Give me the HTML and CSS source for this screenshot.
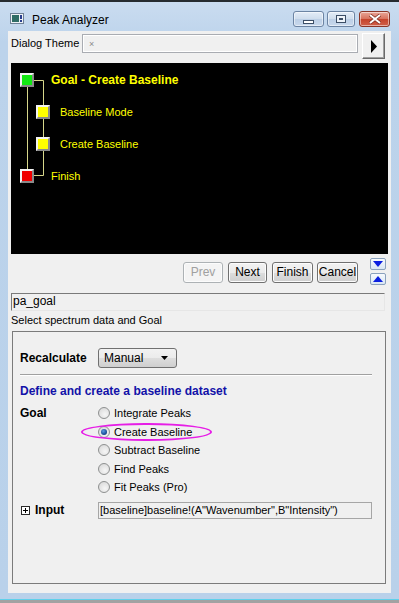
FILE: index.html
```html
<!DOCTYPE html>
<html lang="en">

<head>
    <meta charset="UTF-8">
    <meta name="viewport" content="width=device-width, initial-scale=1.0">
    <title>Peak Analyzer</title>
    <link rel="stylesheet" href="styles.css">
</head>

<body>
    <div class="window">
        <!-- 标题栏 -->
        <div class="titlebar">
            <svg class="app-icon" width="14" height="11" viewBox="0 0 14 11">
                <rect x="0.5" y="0.5" width="13" height="10" fill="#eef2f6" stroke="#6f8297" />
                <rect x="2" y="2" width="7" height="7" fill="#2f6d66" />
                <rect x="10" y="2" width="2" height="4" fill="#2a3f8f" />
                <rect x="10" y="7" width="2" height="2" fill="#2a3f8f" />
            </svg>
            <span class="title">Peak Analyzer</span>
            <div class="caption-btns">
                <span class="cap-btn min"><i></i></span>
                <span class="cap-btn max"><i></i></span>
                <span class="cap-btn close">
                    <svg width="14" height="10" viewBox="0 0 14 10">
                        <path d="M2 1 L12 9 M12 1 L2 9" stroke="#7a2a1e" stroke-width="3.4" />
                        <path d="M2 1 L12 9 M12 1 L2 9" stroke="#ffffff" stroke-width="2" />
                    </svg>
                </span>
            </div>
        </div>

        <div class="client">
            <div class="theme-row">
                <span class="theme-label">Dialog Theme</span>
                <div class="theme-input"><span class="theme-x">×</span></div>
                <span class="theme-btn">
                    <svg width="8" height="13" viewBox="0 0 8 13"><path d="M1 0 L7 6.5 L1 13 Z" fill="#000" /></svg>
                </span>
            </div>

            <!-- 向导树 -->
            <div class="wizard">
                <svg class="wizard-lines" width="60" height="130" viewBox="0 0 60 130">
                    <path d="M23 17.5 H32.5 V112.5 H23 M16.5 24 V106" stroke="#d6d68a" stroke-width="1" fill="none" />
                </svg>
                <div class="node lv0"><span class="box green"></span><span class="node-label goal">Goal - Create Baseline</span></div>
                <div class="node lv1"><span class="box yellow"></span><span class="node-label">Baseline Mode</span></div>
                <div class="node lv1"><span class="box yellow"></span><span class="node-label">Create Baseline</span></div>
                <div class="node lv0"><span class="box red"></span><span class="node-label finish">Finish</span></div>
            </div>

            <div class="nav-row">
                <span class="nav-btn disabled w40">Prev</span>
                <span class="nav-btn w39">Next</span>
                <span class="nav-btn w41">Finish</span>
                <span class="nav-btn w41 cancel">Cancel</span>
                <div class="arrows">
                    <span class="arrow-btn"><svg width="10" height="6" viewBox="0 0 10 6"><path d="M0 0 H10 L5 6 Z" fill="#0a1ee0" /></svg></span>
                    <span class="arrow-btn"><svg width="10" height="6" viewBox="0 0 10 6"><path d="M0 6 H10 L5 0 Z" fill="#0a1ee0" /></svg></span>
                </div>
            </div>

            <div class="name-box">pa_goal</div>
            <p class="desc">Select spectrum data and Goal</p>

            <div class="group">
                <div class="recalc-row">
                    <span class="field-label">Recalculate</span>
                    <span class="combo">Manual<svg width="7" height="4" viewBox="0 0 7 4"><path d="M0 0 H7 L3.5 4 Z" fill="#000" /></svg></span>
                </div>
                <div class="divider"></div>
                <h3 class="section-title">Define and create a baseline dataset</h3>

                <div class="goal-row">
                    <span class="field-label">Goal</span>
                    <ul class="radio-list">
                        <li><span class="radio"></span>Integrate Peaks</li>
                        <li class="picked"><span class="radio on"></span>Create Baseline<span class="ring"></span></li>
                        <li><span class="radio"></span>Subtract Baseline</li>
                        <li><span class="radio"></span>Find Peaks</li>
                        <li><span class="radio"></span>Fit Peaks (Pro)</li>
                    </ul>
                </div>

                <div class="input-row">
                    <span class="field-label expand"><span class="plus"></span>Input</span>
                    <span class="input-field">[baseline]baseline!(A"Wavenumber",B"Intensity")</span>
                </div>
            </div>
        </div>
    </div>
</body>

</html>
```

FILE: styles.css
```css
* {
    padding: 0;
    margin: 0;
    list-style: none;
    box-sizing: border-box;
}

body {
    background: #a2a2a2;
    font-family: "Liberation Sans", Arial, sans-serif;
    font-size: 11px;
    color: #000;
}

.window {
    height: 600px;
    background: linear-gradient(to bottom, #cadcf0 0, #bcd3eb 40px, #b9d1ea 100%);
    border-top: 2px solid #262b30;
    border-bottom: 1px solid #5fd0ea;
    padding: 0 8px 6px;
    display: flex;
    flex-direction: column;
}

/* 标题栏 */
.titlebar {
    height: 29px;
    display: flex;
    align-items: flex-start;
}

.app-icon {
    margin: 11px 0 0 2px;
}

.title {
    margin: 10px 0 0 8px;
    font-size: 12px;
    line-height: 16px;
    color: #000;
}

.caption-btns {
    display: flex;
    margin: 9px 1px 0 auto;
}

.cap-btn {
    height: 16px;
    border: 1px solid #6c84a3;
    border-radius: 3px;
    background: linear-gradient(to bottom, #e3ecf7 0, #cfdded 50%, #bccfe6 51%, #c8d8ec 100%);
    display: flex;
    align-items: center;
    justify-content: center;
    box-shadow: inset 0 0 0 1px rgba(255, 255, 255, 0.5);
}

.cap-btn.min {
    width: 31px;
}

.cap-btn.min i {
    width: 11px;
    height: 4px;
    margin-top: 5px;
    border: 1px solid #3c4e66;
    background: #fff;
}

.cap-btn.max {
    width: 28px;
    margin-left: 3px;
}

.cap-btn.max i {
    width: 10px;
    height: 8px;
    border: 1px solid #3c4e66;
    box-shadow: inset 0 0 0 2px #eef3f9;
    background: #3c4e66;
}

.cap-btn.close {
    width: 31px;
    margin-left: 4px;
    border-color: #8a3527;
    background: linear-gradient(to bottom, #e9a698 0, #d8715c 50%, #c5432b 51%, #d0604a 100%);
}

/* 客户区 */
.client {
    flex: 1;
    background: #f0f0f0;
    padding-left: 3px;
    display: flex;
    flex-direction: column;
}

.theme-row {
    display: flex;
    height: 26px;
    margin-top: 2px;
}

.theme-label {
    width: 71px;
    margin-top: 1px;
    line-height: 19px;
}

.theme-input {
    width: 276px;
    height: 19px;
    margin-top: 1px;
    border: 1px solid #a9acb2;
    background: #f0f0f0;
    box-shadow: inset 1px 1px 0 #fff, inset -1px -1px 0 #fff;
    line-height: 16px;
}

.theme-x {
    font-size: 9px;
    color: #8a8a8a;
    margin-left: 6px;
}

.theme-btn {
    width: 23px;
    height: 26px;
    margin-left: 4px;
    border: 1px solid;
    border-color: #fff #6a6a6a #6a6a6a #fff;
    box-shadow: inset -1px -1px 0 #a0a0a0;
    background: #f0f0f0;
    display: flex;
    align-items: center;
    justify-content: center;
}

/* 向导树 */
.wizard {
    position: relative;
    height: 191px;
    margin: 4px 3px 0 0;
    background: #000;
    padding-top: 10px;
    display: flex;
    flex-direction: column;
    gap: 18px;
}

.wizard-lines {
    position: absolute;
    left: 0;
    top: 0;
}

.node {
    position: relative;
    height: 14px;
    display: flex;
    align-items: center;
}

.node.lv0 {
    padding-left: 9px;
}

.node.lv1 {
    padding-left: 25px;
}

.box {
    width: 14px;
    height: 14px;
    border: 2px solid;
    border-color: #f4f4f4 #8a8a8a #8a8a8a #f4f4f4;
}

.box.green {
    background: #12e812;
}

.box.yellow {
    background: #ffff00;
}

.box.red {
    background: #f00000;
}

.node-label {
    color: #ffff00;
    font-size: 11px;
    margin-left: 10px;
}

.node-label.goal {
    font-size: 12px;
    font-weight: bold;
    margin-left: 17px;
}

.node-label.finish {
    margin-left: 17px;
}

/* 导航按钮 */
.nav-row {
    height: 39px;
    display: flex;
    justify-content: flex-end;
    align-items: flex-start;
    padding-right: 5px;
}

.nav-btn {
    height: 21px;
    margin-top: 8px;
    margin-left: 5px;
    border: 1px solid #707070;
    border-radius: 3px;
    background: linear-gradient(to bottom, #f2f2f2 0, #ebebeb 50%, #dddddd 51%, #cfcfcf 100%);
    box-shadow: inset 0 0 0 1px #fcfcfc;
    font-size: 12px;
    line-height: 19px;
    text-align: center;
}

.nav-btn.cancel {
    margin-left: 4px;
}

.nav-btn.disabled {
    border-color: #adb2b5;
    background: #f4f4f4;
    color: #a0a0a0;
}

.w39 {
    width: 39px;
}

.w40 {
    width: 40px;
}

.w41 {
    width: 41px;
}

.arrows {
    margin: 4px 0 0 12px;
    display: flex;
    flex-direction: column;
    gap: 3px;
}

.arrow-btn {
    width: 16px;
    height: 12px;
    border: 1px solid #8aa1bd;
    border-radius: 2px;
    background: linear-gradient(to bottom, #f7fafd, #d9e6f4);
    display: flex;
    align-items: center;
    justify-content: center;
}

.name-box {
    height: 18px;
    margin-right: 6px;
    border: 1px solid;
    border-color: #7a7a7a #e6e6e6 #e6e6e6 #7a7a7a;
    background: #f0f0f0;
    font-size: 12px;
    line-height: 15px;
    padding-left: 1px;
}

.desc {
    margin-top: 2px;
    line-height: 14px;
}

/* 分组框 */
.group {
    height: 253px;
    margin: 4px 5px 0 1px;
    border: 1px solid #7b7b7b;
    padding: 16px 0 0 7px;
}

.field-label {
    width: 78px;
    font-size: 12px;
    font-weight: bold;
    flex-shrink: 0;
}

.recalc-row {
    display: flex;
    align-items: center;
    height: 20px;
}

.combo {
    width: 79px;
    height: 20px;
    border: 1px solid #707070;
    border-radius: 3px;
    background: linear-gradient(to bottom, #f2f2f2 0, #ebebeb 50%, #dddddd 51%, #cfcfcf 100%);
    font-size: 12px;
    line-height: 18px;
    padding: 0 8px 0 5px;
    display: flex;
    align-items: center;
    justify-content: space-between;
}

.divider {
    margin: 6px 13px 0 0;
    border-top: 1px solid #a0a0a0;
    border-bottom: 1px solid #fff;
}

.section-title {
    margin-top: 8px;
    font-size: 12px;
    line-height: 15px;
    color: #1212a8;
}

.goal-row {
    display: flex;
    margin-top: 5px;
}

.goal-row .field-label {
    line-height: 18px;
}

.radio-list li {
    position: relative;
    height: 18.5px;
    display: flex;
    align-items: center;
    font-size: 11px;
}

.radio {
    width: 12px;
    height: 12px;
    margin-right: 4px;
    border-radius: 50%;
    border: 1px solid #8e9090;
    background: radial-gradient(circle at 60% 65%, #f6f6f6 0, #e2e2e2 60%, #cfcfcf 100%);
    display: flex;
    align-items: center;
    justify-content: center;
}

.radio.on::after {
    content: "";
    width: 6px;
    height: 6px;
    border-radius: 50%;
    background: radial-gradient(circle at 40% 35%, #5b9be0 0, #1c4f9a 60%, #0b2b63 100%);
}

.ring {
    position: absolute;
    left: -17px;
    top: 0;
    width: 131px;
    height: 18.5px;
    border: 2px solid #e61ee6;
    border-radius: 50%;
}

.input-row {
    display: flex;
    align-items: center;
    height: 17px;
    margin-top: 5px;
}

.field-label.expand {
    display: flex;
    align-items: center;
}

.plus {
    position: relative;
    width: 9px;
    height: 9px;
    margin: 0 5px 0 1px;
    border: 1px solid #2a2a2a;
    background: #fff;
}

.plus::before,
.plus::after {
    content: "";
    position: absolute;
    background: #000;
}

.plus::before {
    left: 1px;
    top: 3px;
    width: 5px;
    height: 1px;
}

.plus::after {
    left: 3px;
    top: 1px;
    width: 1px;
    height: 5px;
}

.input-field {
    width: 274px;
    height: 17px;
    border: 1px solid #a6a6a6;
    line-height: 15px;
    padding-left: 1px;
    white-space: nowrap;
    overflow: hidden;
}
```
